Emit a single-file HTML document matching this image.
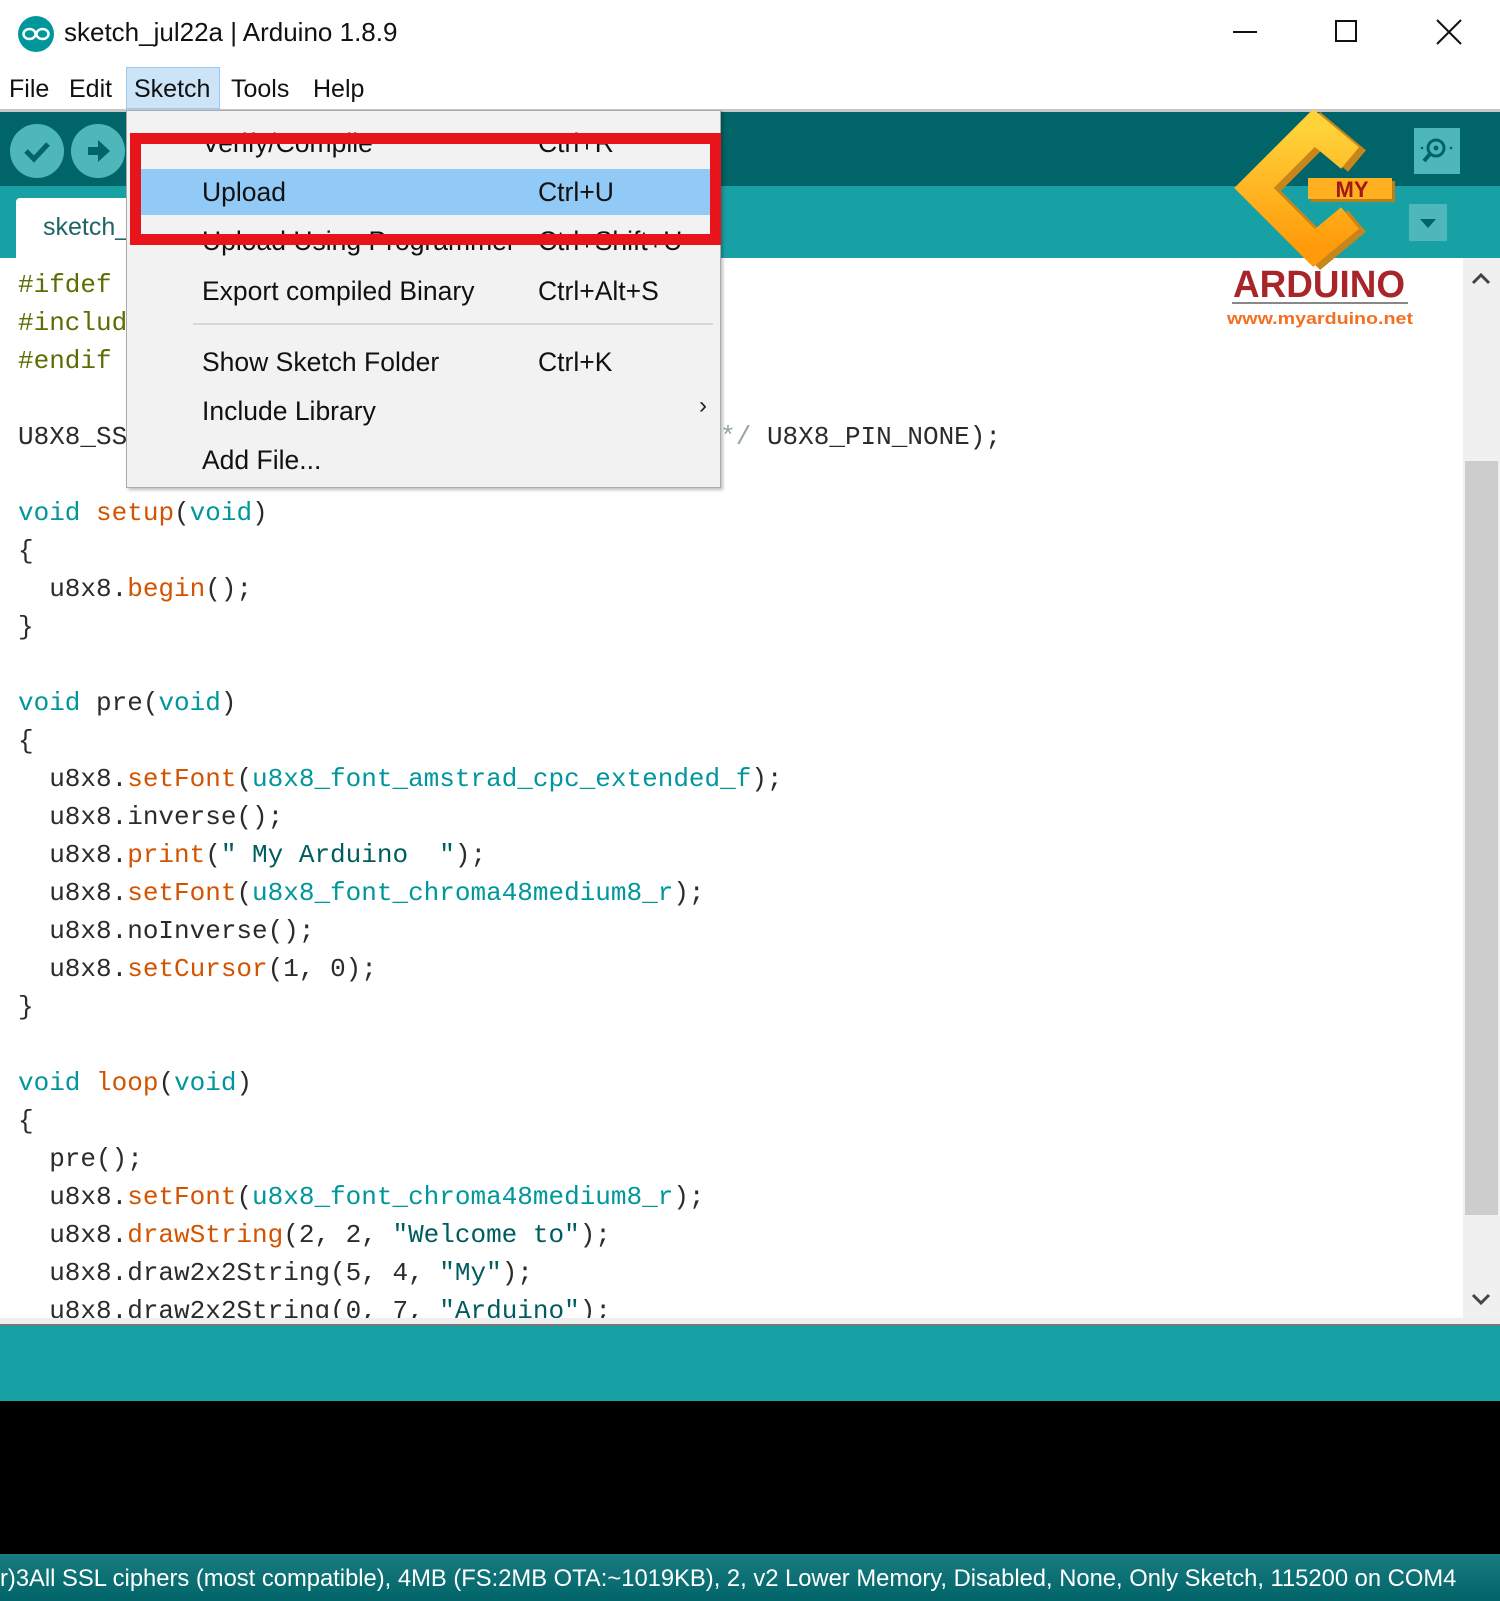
<!DOCTYPE html>
<html><head><meta charset="utf-8">
<style>
*{margin:0;padding:0;box-sizing:border-box}
body{width:1500px;height:1601px;overflow:hidden;background:#fff;position:relative;font-family:"Liberation Sans",sans-serif}
.abs{position:absolute}
.code{position:absolute;left:18px;top:266px;font-family:"Liberation Mono",monospace;font-size:26px;line-height:38px;color:#2b2b2b;white-space:pre}
.k{color:#00979c}.f{color:#d35400}.p{color:#5e6d03}.s{color:#005c5f}.c{color:#95a5a6}
.mi{position:absolute;left:75px;font-size:26.5px;color:#111;white-space:nowrap}
.sc{position:absolute;left:411px;font-size:26.5px;color:#111;white-space:nowrap}
</style></head><body>
<svg class="abs" style="left:17px;top:15px" width="38" height="38" viewBox="0 0 38 38">
<circle cx="19" cy="19" r="18" fill="#00979c"/>
<ellipse cx="12.5" cy="19" rx="6" ry="5" fill="none" stroke="#fff" stroke-width="2.5"/>
<ellipse cx="25.5" cy="19" rx="6" ry="5" fill="none" stroke="#fff" stroke-width="2.5"/>
</svg>
<div class="abs" style="left:64px;top:17px;font-size:26px;color:#111">sketch_jul22a | Arduino 1.8.9</div>
<div class="abs" style="left:1233px;top:31px;width:24px;height:2px;background:#111"></div>
<div class="abs" style="left:1335px;top:20px;width:22px;height:22px;border:2px solid #111"></div>
<svg class="abs" style="left:1436px;top:19px" width="26" height="26"><path d="M1 1L25 25M25 1L1 25" stroke="#111" stroke-width="2"/></svg>
<div class="abs" style="left:126px;top:67px;width:94px;height:42px;background:#cce4f7;border:1px solid #99c9ef"></div>
<div class="abs" style="left:9px;top:75px;font-size:25px;color:#111">File</div>
<div class="abs" style="left:69px;top:75px;font-size:25px;color:#111">Edit</div>
<div class="abs" style="left:134px;top:75px;font-size:25px;color:#111">Sketch</div>
<div class="abs" style="left:231px;top:75px;font-size:25px;color:#111">Tools</div>
<div class="abs" style="left:313px;top:75px;font-size:25px;color:#111">Help</div>
<div class="abs" style="left:0;top:109px;width:1500px;height:3px;background:#c8c8c8"></div>
<div class="abs" style="left:0;top:112px;width:1500px;height:74px;background:#006468"></div>
<div class="abs" style="left:0;top:186px;width:1500px;height:72px;background:#17a1a5"></div>
<svg class="abs" style="left:9px;top:123px" width="120" height="56">
<circle cx="28" cy="28" r="27" fill="#4db7bb"/>
<path d="M17 28l8 8 14-15" fill="none" stroke="#006468" stroke-width="5"/>
<circle cx="89" cy="28" r="27" fill="#4db7bb"/>
<path d="M79 24h10v-7l12 11-12 11v-7h-10z" fill="#006468"/>
</svg>
<div class="abs" style="left:1414px;top:128px;width:46px;height:46px;background:#4db7bb"></div>
<svg class="abs" style="left:1414px;top:128px" width="46" height="46"><circle cx="22" cy="20" r="8" fill="none" stroke="#006468" stroke-width="3"/><circle cx="22" cy="20" r="2.5" fill="#006468"/><path d="M16 26l-6 7" stroke="#006468" stroke-width="4"/><circle cx="8" cy="20" r="1.3" fill="#006468"/><circle cx="37" cy="20" r="1.3" fill="#006468"/></svg>
<div class="abs" style="left:1409px;top:204px;width:38px;height:37px;background:#4db7bb"></div>
<svg class="abs" style="left:1409px;top:204px" width="38" height="37"><path d="M11 15h16l-8 9z" fill="#006468"/></svg>
<div class="abs" style="left:16px;top:198px;width:120px;height:62px;background:#fff;border-radius:4px 4px 0 0"></div>
<div class="abs" style="left:43px;top:213px;font-size:25px;color:#1f6466">sketch_jul22a</div>
<div class="code"><span class="p">#ifdef U8X8_HAVE_HW_SPI</span>
<span class="p">#include &lt;SPI.h&gt;</span>
<span class="p">#endif</span>

U8X8_SSD1306_128X64_NONAME_HW_I2C u8x8(/*rst=<span class="c">*/</span> U8X8_PIN_NONE);

<span class="k">void</span> <span class="f">setup</span>(<span class="k">void</span>)
{
  u8x8.<span class="f">begin</span>();
}

<span class="k">void</span> pre(<span class="k">void</span>)
{
  u8x8.<span class="f">setFont</span>(<span class="k">u8x8_font_amstrad_cpc_extended_f</span>);
  u8x8.inverse();
  u8x8.<span class="f">print</span>(<span class="s">" My Arduino  "</span>);
  u8x8.<span class="f">setFont</span>(<span class="k">u8x8_font_chroma48medium8_r</span>);
  u8x8.noInverse();
  u8x8.<span class="f">setCursor</span>(1, 0);
}

<span class="k">void</span> <span class="f">loop</span>(<span class="k">void</span>)
{
  pre();
  u8x8.<span class="f">setFont</span>(<span class="k">u8x8_font_chroma48medium8_r</span>);
  u8x8.<span class="f">drawString</span>(2, 2, <span class="s">"Welcome to"</span>);
  u8x8.draw2x2String(5, 4, <span class="s">"My"</span>);
  u8x8.draw2x2String(0, 7, <span class="s">"Arduino"</span>);
</div>
<div class="abs" style="left:1463px;top:258px;width:37px;height:1060px;background:#f0f0f0"></div>
<div class="abs" style="left:1465px;top:461px;width:33px;height:754px;background:#cdcdcd"></div>
<svg class="abs" style="left:1470px;top:272px" width="22" height="14"><path d="M3 11l8-8 8 8" fill="none" stroke="#444" stroke-width="3"/></svg>
<svg class="abs" style="left:1470px;top:1292px" width="22" height="14"><path d="M3 3l8 8 8-8" fill="none" stroke="#444" stroke-width="3"/></svg>
<svg class="abs" style="left:1220px;top:110px" width="200" height="225" viewBox="1220 110 200 225">
<defs><linearGradient id="g" x1="0" y1="0" x2="0" y2="1"><stop offset="0" stop-color="#ffd23a"/><stop offset="1" stop-color="#ff9a0a"/></linearGradient></defs>
<path d="M1354,158 L1318,128 L1258,188 L1318,248 L1354,218" fill="none" stroke="#c8861a" stroke-width="28" transform="translate(3,3)"/>
<path d="M1350,158 L1314,128 L1254,188 L1314,248 L1350,218" fill="none" stroke="url(#g)" stroke-width="28"/>
<rect x="1311" y="181" width="84" height="21" fill="#b8801c"/>
<rect x="1308" y="178" width="84" height="21" fill="#ffb020"/>
<text x="1352" y="197" text-anchor="middle" font-family="Liberation Sans" font-weight="bold" font-size="22" fill="#a01818">MY</text>
<text x="1319" y="297" text-anchor="middle" font-family="Liberation Sans" font-weight="bold" font-size="38" fill="#a8262a" textLength="172" lengthAdjust="spacingAndGlyphs">ARDUINO</text>
<rect x="1232" y="302" width="176" height="2" fill="#888"/>
<text x="1320" y="324" text-anchor="middle" font-family="Liberation Sans" font-weight="bold" font-size="17" fill="#f37021" textLength="186" lengthAdjust="spacingAndGlyphs">www.myarduino.net</text>
</svg>
<div class="abs" style="left:126px;top:110px;width:595px;height:378px;background:#f2f2f2;border:1px solid #aaa;box-shadow:2px 2px 3px rgba(0,0,0,.25);overflow:hidden">
<div class="mi" style="top:17px">Verify/Compile</div><div class="sc" style="top:17px">Ctrl+R</div>
<div class="abs" style="left:3px;top:58px;width:588px;height:46px;background:#91c9f7"></div>
<div class="mi" style="top:66px">Upload</div><div class="sc" style="top:66px">Ctrl+U</div>
<div class="mi" style="top:115px">Upload Using Programmer</div><div class="sc" style="top:115px">Ctrl+Shift+U</div>
<div class="mi" style="top:165px">Export compiled Binary</div><div class="sc" style="top:165px">Ctrl+Alt+S</div>
<div class="abs" style="left:66px;top:212px;width:520px;height:2px;background:#d7d7d7"></div>
<div class="mi" style="top:236px">Show Sketch Folder</div><div class="sc" style="top:236px">Ctrl+K</div>
<div class="mi" style="top:285px">Include Library</div><div class="abs" style="left:572px;top:281px;font-size:24px;color:#222">›</div>
<div class="mi" style="top:334px">Add File...</div>
</div>
<div class="abs" style="left:130px;top:133px;width:591px;height:112px;border:11px solid #e8141c"></div>
<div class="abs" style="left:0;top:1318px;width:1500px;height:8px;background:#eee;border-bottom:2px solid #777"></div>
<div class="abs" style="left:0;top:1326px;width:1500px;height:75px;background:#17a1a5"></div>
<div class="abs" style="left:0;top:1401px;width:1500px;height:153px;background:#000"></div>
<div class="abs" style="left:0;top:1554px;width:1500px;height:47px;background:linear-gradient(#1a7c80,#006468)"></div>
<div class="abs" style="left:0;top:1565px;font-size:24px;color:#fff;white-space:nowrap;transform:scaleX(0.99);transform-origin:0 0">r)3All SSL ciphers (most compatible), 4MB (FS:2MB OTA:~1019KB), 2, v2 Lower Memory, Disabled, None, Only Sketch, 115200 on COM4</div>
</body></html>
